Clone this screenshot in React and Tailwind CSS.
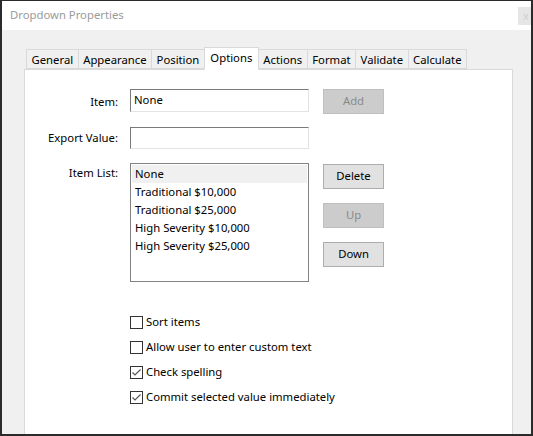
import { useState } from 'react';

const tabs = ['General', 'Appearance', 'Position', 'Options', 'Actions', 'Format', 'Validate', 'Calculate'];

const items = ['None', 'Traditional $10,000', 'Traditional $25,000', 'High Severity $10,000', 'High Severity $25,000'];

function TextBox({ value, height }) {
  return (
    <div
      className={`w-[179px] ${height} border border-t-[#7a7a7a] border-l-[#7a7a7a] border-r-[#e3e3e3] border-b-[#e3e3e3] bg-white pl-[3px] leading-[19px]`}
    >
      {value}
    </div>
  );
}

function Button({ label, disabled }) {
  return (
    <button
      className={`w-[61px] h-[25px] border text-center ${
        disabled ? 'bg-[#cccccc] border-[#bfbfbf] text-[#8a8a8a]' : 'bg-[#e1e1e1] border-[#adadad] text-black'
      }`}
    >
      {label}
    </button>
  );
}

function CheckBox({ label, checked }) {
  return (
    <div className="flex items-center h-[25px]">
      <div className="w-[13px] h-[13px] border border-[#333333] bg-white flex items-center justify-center">
        {checked && (
          <svg width="11" height="11" viewBox="0 0 11 11">
            <path d="M1.5 5.5 L4 8 L9.5 2.5" fill="none" stroke="#555555" strokeWidth="1.2" />
          </svg>
        )}
      </div>
      <span className="ml-[3px]">{label}</span>
    </div>
  );
}

export default function App() {
  const [active] = useState('Options');

  return (
    <div
      className="w-[533px] h-[436px] bg-[#2b2b2b] pt-px pl-[2px] pr-[2px] pb-[2px] overflow-hidden text-[11.3px] text-black"
      style={{ fontFamily: '"Noto Sans", "Open Sans", sans-serif' }}
    >
      <div className="h-full bg-[#f0f0f0] flex flex-col overflow-hidden">
        {/* title bar */}
        <div className="h-[29px] bg-white flex items-center justify-between shrink-0">
          <span className="ml-[8px] text-[#9a9a9a]">Dropdown Properties</span>
          <div className="w-[13px] h-[18px] bg-[#e6e6e6] self-start mt-[6px] text-[#cfcfcf] text-[11px] leading-[18px] pl-[5px]">x</div>
        </div>

        {/* tabs */}
        <div className="flex items-end mt-[17px] ml-[24px] h-[22px] shrink-0">
          {tabs.map((t) => {
            const isActive = t === active;
            return (
              <div
                key={t}
                className={`border border-[#d9d9d9] -ml-px first:ml-0 ${
                  isActive
                    ? 'bg-white h-[23px] leading-[19px] border-b-white relative z-10 -mb-px px-[5.5px]'
                    : 'bg-[#f0f0f0] h-[20px] leading-[19px] px-[4.5px]'
                }`}
              >
                {t}
              </div>
            );
          })}
        </div>

        {/* panel */}
        <div className="ml-[22px] w-[489px] flex-1 bg-white border border-[#d9d9d9] border-b-0">
          <div className="flex flex-col pl-[12px]">
            {/* item row */}
            <div className="flex items-start mt-[19px]">
              <div className="w-[81px] text-right leading-[25px]">Item:</div>
              <div className="ml-[12px]">
                <TextBox value="None" height="h-[23px]" />
              </div>
              <div className="ml-[14px]">
                <Button label="Add" disabled />
              </div>
            </div>

            {/* export value row */}
            <div className="flex items-start mt-[13px]">
              <div className="w-[81px] text-right leading-[22px]">Export Value:</div>
              <div className="ml-[12px]">
                <TextBox value="" height="h-[22px]" />
              </div>
            </div>

            {/* item list */}
            <div className="flex items-start mt-[14px]">
              <div className="w-[81px] text-right leading-[18px] pt-px">Item List:</div>
              <div className="ml-[12px] w-[179px] h-[119px] border border-[#828282] bg-white p-px">
                {items.map((it, i) => (
                  <div key={it} className={`h-[18px] leading-[18px] pl-[3px] ${i === 0 ? 'bg-[#f0f0f0]' : ''}`}>
                    {it}
                  </div>
                ))}
              </div>
              <div className="ml-[14px] flex flex-col gap-[14px] pt-px">
                <Button label="Delete" />
                <Button label="Up" disabled />
                <Button label="Down" />
              </div>
            </div>

            {/* options */}
            <div className="flex flex-col ml-[93px] mt-[28px]">
              <CheckBox label="Sort items" />
              <CheckBox label="Allow user to enter custom text" />
              <CheckBox label="Check spelling" checked />
              <CheckBox label="Commit selected value immediately" checked />
            </div>
          </div>
        </div>
      </div>
    </div>
  );
}
